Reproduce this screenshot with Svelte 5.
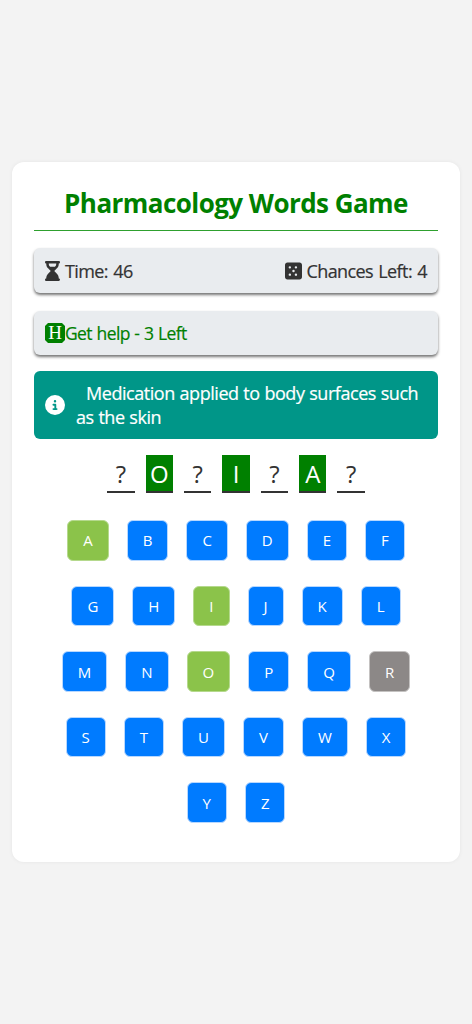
<script>
  const slots = ['?', 'O', '?', 'I', '?', 'A', '?'];
  const correct = ['A', 'I', 'O'];
  const wrong = ['R'];
  const letters = 'ABCDEFGHIJKLMNOPQRSTUVWXYZ'.split('');
  const state = (l) => (correct.includes(l) ? 'hit' : wrong.includes(l) ? 'miss' : '');
</script>

<main class="page">
  <section class="card">
    <h1>Pharmacology Words Game</h1>

    <div class="bar stats">
      <span class="stat">
        <svg class="hourglass" viewBox="0 0 384 512" aria-hidden="true"><path d="M0 32C0 14.300 14.300 0 32 0h320c17.700 0 32 14.300 32 32s-14.300 32-32 32v11c0 42.400-16.900 83.100-46.900 113.100L237.300 256l67.900 67.900c30 30 46.900 70.700 46.900 113.100v11c17.700 0 32 14.300 32 32s-14.300 32-32 32H32c-17.700 0-32-14.300-32-32s14.300-32 32-32v-11c0-42.400 16.900-83.100 46.900-113.100L146.700 256 78.900 188.100C48.900 158.100 32 117.400 32 75V64C14.300 64 0 49.700 0 32zM96 64v11c0 25.500 10.100 49.900 28.100 67.900l7 7h121.800l7-7c18-18 28.100-42.400 28.100-67.900V64H96z" /></svg>
        <span class="wide">Time: 46</span>
      </span>
      <span class="stat">
        <svg class="dice" viewBox="0 0 448 512" aria-hidden="true"><path fill-rule="evenodd" d="M64 32C28.700 32 0 60.700 0 96v320c0 35.300 28.700 64 64 64h320c35.300 0 64-28.700 64-64V96c0-35.300-28.700-64-64-64H64zm64 96a32 32 0 1 1 0 64 32 32 0 1 1 0-64zm160 0a32 32 0 1 1 0 64 32 32 0 1 1 0-64zM192 256a32 32 0 1 1 64 0 32 32 0 1 1-64 0zm-64 64a32 32 0 1 1 0 64 32 32 0 1 1 0-64zm160 0a32 32 0 1 1 0 64 32 32 0 1 1 0-64z" /></svg>
        <span class="wide">Chances Left: 4</span>
      </span>
    </div>

    <div class="bar help">
      <span class="h-icon">H</span>Get help - 3 Left
    </div>

    <div class="hint">
      <svg class="info" viewBox="0 0 512 512" aria-hidden="true"><path fill-rule="evenodd" d="M256 512a256 256 0 1 0 0-512 256 256 0 1 0 0 512zm-40-176h24v-64h-24c-13.300 0-24-10.700-24-24s10.700-24 24-24h48c13.300 0 24 10.700 24 24v88h8c13.300 0 24 10.700 24 24s-10.700 24-24 24h-80c-13.300 0-24-10.700-24-24s10.700-24 24-24zm40-208a32 32 0 1 1 0 64 32 32 0 1 1 0-64z" /></svg>
      <p>Medication applied to body surfaces such as the skin</p>
    </div>

    <div class="word">
      {#each slots as s}
        <span class="slot" class:open={s !== '?'}>{s}</span>
      {/each}
    </div>

    <div class="keys">
      {#each letters as l}
        <button class="key {state(l)}">{l}</button>
      {/each}
    </div>
  </section>
</main>

<style>
  :global(body) {
    margin: 0;
    background: #f3f3f3;
    font-family: "Open Sans", "Noto Sans", sans-serif;
    color: #333;
  }
  .page {
    min-height: 100vh;
    display: flex;
    align-items: center;
    justify-content: center;
    padding: 0 12px;
    box-sizing: border-box;
  }
  .card {
    width: 448px;
    box-sizing: border-box;
    background: #fff;
    border-radius: 12px;
    padding: 22px;
    box-shadow: 0 0 4px rgba(0, 0, 0, 0.06);
  }
  h1 {
    margin: 0 0 17px;
    padding: 1px 0 8px;
    border-bottom: 1px solid #2ea02e;
    color: #008000;
    font-size: 26px;
    line-height: 37px;
    font-weight: 700;
    text-align: center;
    letter-spacing: -0.55px;
  }
  .bar {
    display: flex;
    align-items: center;
    height: 45px;
    box-sizing: border-box;
    padding: 0 11px;
    background: #e9ecef;
    border-radius: 6px;
    box-shadow: 0 2px 3px rgba(0, 0, 0, 0.55);
    font-size: 18px;
    -webkit-text-stroke: 0.2px currentColor;
  }
  .stats {
    justify-content: space-between;
    margin-bottom: 18px;
  }
  .stat {
    display: flex;
    align-items: center;
    gap: 5px;
  }
  .wide {
    letter-spacing: -0.6px;
    word-spacing: 1.2px;
  }
  .stat svg {
    fill: #333;
    display: block;
  }
  .hourglass {
    width: 15px;
    height: 20px;
  }
  .dice {
    width: 17px;
    height: 20px;
  }
  .help {
    height: 44px;
    color: #008000;
    margin-bottom: 16px;
    font-size: 17.5px;
    letter-spacing: -0.6px;
    word-spacing: 0.6px;
  }
  .h-icon {
    width: 20px;
    height: 20px;
    background: #008000;
    color: #fff;
    font-family: "Liberation Serif", serif;
    font-size: 19px;
    line-height: 20px;
    text-align: center;
    letter-spacing: 0;
    -webkit-text-stroke: 0;
    clip-path: polygon(3px 0, 17px 0, 20px 3px, 20px 17px, 17px 20px, 3px 20px, 0 17px, 0 3px);
  }
  .hint {
    display: flex;
    align-items: center;
    gap: 11px;
    height: 68px;
    box-sizing: border-box;
    padding: 0 11px;
    background: #009688;
    border-radius: 6px;
    color: #fff;
    font-size: 18px;
    letter-spacing: -0.45px;
    word-spacing: 0.5px;
    -webkit-text-stroke: 0.2px currentColor;
    margin-bottom: 16px;
  }
  .hint p {
    margin: 0;
    text-indent: 10px;
    line-height: 24px;
  }
  .info {
    flex: none;
    width: 20px;
    height: 20px;
    fill: #fff;
  }
  .word {
    display: flex;
    justify-content: center;
    gap: 11px;
    margin-bottom: 27px;
  }
  .slot {
    width: 27.4px;
    height: 38px;
    box-sizing: border-box;
    border-bottom: 2px solid #333;
    text-align: center;
    font-size: 24px;
    line-height: 38px;
  }
  .slot.open {
    background: #008000;
    color: #fff;
  }
  .keys {
    display: flex;
    flex-wrap: wrap;
    justify-content: center;
    row-gap: 25px;
    padding-bottom: 17px;
  }
  .key {
    height: 40.6px;
    margin: 0 9px;
    padding: 0 15px;
    border: 1px solid #b8d8ff;
    border-radius: 6px;
    background: #007bff;
    color: #fff;
    font-family: inherit;
    font-size: 15px;
  }
  .key.hit {
    background: #8bc34a;
    border-color: #b5d98d;
  }
  .key.miss {
    background: #8c8887;
    border-color: #c4c2c1;
  }
</style>
